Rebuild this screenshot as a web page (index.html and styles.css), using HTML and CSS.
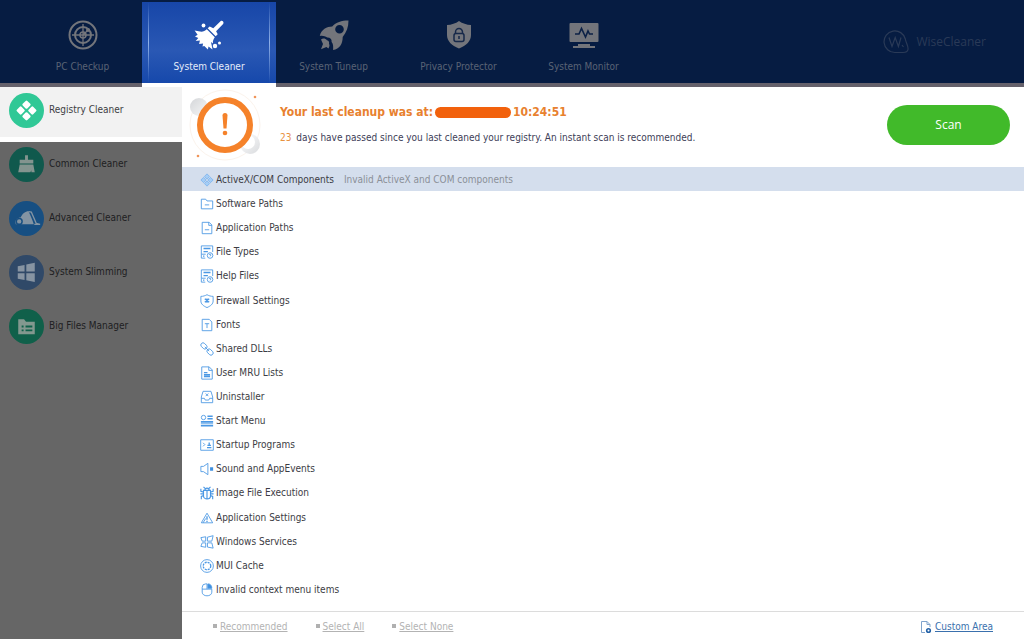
FILE: index.html
```
<!DOCTYPE html>
<html lang="en">
  <head>
    <meta charset="UTF-8" />
    <meta name="viewport" content="width=device-width, initial-scale=1.0" />
    <title>System Cleaner</title>
    <link rel="stylesheet" href="styles.css">
  </head>
  <body>
    <header class="header">
      <nav class="tabs">
        <button class="tab">
          <svg class="tab-icon" viewBox="0 0 30 30" fill="none" stroke="currentColor" stroke-width="2">
            <circle cx="15" cy="15" r="13.5" />
            <circle cx="15" cy="15" r="8" />
            <circle cx="15" cy="15" r="3" stroke-width="1.5" />
            <path d="M15 4v22M4 15h22M15 15l5-5" stroke-width="1.3" />
            <circle cx="20" cy="10" r="2" fill="currentColor" stroke="none" />
          </svg>
          <span>PC Checkup</span>
        </button>
        <button class="tab active">
          <svg class="tab-icon" viewBox="0 0 30 30" fill="currentColor">
            <path d="M26.500 1.200c1.600-1.200 4 .8 2.600 2.800l-7 7.200 1.600 3-2 2-8-8 2-1.800 3.600 1.800z" />
            <path d="M12.800 9.300l8 8c-1.400 2-2.200 3.800-1.800 6.200l-2-1.500 1.500 7.500-4-3-.6 3-3.600-3.500-1.800.5.600-3-4 .5.800-3.500-4.200.6 2.600-3.200L1 16.500l2.600-1.800-3-4.200 6.800 1.200c2 0 3.800-1 5.400-2.400z" />
            <circle cx="9.500" cy="5.500" r="1.900" />
            <circle cx="21" cy="26" r="2.200" />
            <circle cx="25.500" cy="23" r="1.500" />
          </svg>
          <span>System Cleaner</span>
        </button>
        <button class="tab">
          <svg class="tab-icon" viewBox="0 0 30 30" fill="currentColor" fill-rule="evenodd">
            <path d="M29.500.6C23 .5 17 2.500 13.200 6.500 8 6.500 2 9.500.8 16c3-.8 5 .3 7.500 1.500 3 0 4.700 1.500 4.300 4.500 2 2 1.500 5 1.500 8 6.500-1 9.600-6 9.600-13C27.500 12.500 29.500 7 29.500.6zM20.500 5a4.300 4.300 0 1 1 0 8.600 4.300 4.300 0 0 1 0-8.600z" />
            <path d="M2 19.500c2-1.500 4.500-1 6 .7 2 .5 2.500 2 2 3.500 1 1.500.3 3-.6 4.800l-2-1.500-5.400 2.300 2-5.300z" />
          </svg>
          <span>System Tuneup</span>
        </button>
        <button class="tab">
          <svg class="tab-icon" viewBox="0 0 30 30">
            <path d="M15 1c3.500 2.500 7.500 3.800 12 4v10c0 6-4.500 10.500-12 13.500C7.500 25.500 3 21 3 15V5c4.500-.2 8.500-1.500 12-4z" fill="currentColor" />
            <g fill="none" stroke="#17294a" stroke-width="1.500">
              <rect x="10" y="13.500" width="10" height="8" rx="2" />
              <path d="M11.500 13.500V12a3.500 3.500 0 0 1 7 0v1.500M15 16v3" />
            </g>
          </svg>
          <span>Privacy Protector</span>
        </button>
        <button class="tab">
          <svg class="tab-icon" viewBox="0 0 30 30" fill="currentColor">
            <rect x=".5" y="3" width="29" height="19" rx="1" />
            <path d="M9 24h12v2h5v2H4v-2h5z" />
            <path d="M6 14h4l2.500-5.500 4 8.500 2.500-6 1.500 3H24" fill="none" stroke="#0c2146" stroke-width="1.600" />
          </svg>
          <span>System Monitor</span>
        </button>
      </nav>
      <div class="brand">
        <svg class="brand-icon" viewBox="0 0 26 24" fill="none" stroke="currentColor" stroke-width="1.200">
          <path d="M20 22.500h-8A10.800 10.800 0 1 1 22.300 9c.8 4.500 3.200 7 2.700 10.500-.4 2.500-3 3-5 3" />
          <path d="M6 7.500l3 9 3.200-9 3.200 9 2.600-9M19 15l1.500 2" />
        </svg>
        <span>WiseCleaner</span>
      </div>
    </header>

    <div class="page">
      <!-- left menu -->
      <nav class="sidebar">
        <button class="side-item active">
          <svg class="side-icon" viewBox="0 0 36 36">
            <circle cx="18" cy="18" r="18" fill="#30c896" />
            <path d="M18 9l3 3-3 3-3-3zM12 15l3 3-3 3-3-3zM24 15l3 3-3 3-3-3zM18 21l3 3-3 3-3-3z" fill="#fff" stroke="#fff" stroke-width="2.500" stroke-linejoin="round" />
          </svg>
          <span>Registry Cleaner</span>
        </button>
        <button class="side-item">
          <svg class="side-icon" viewBox="0 0 36 36">
            <circle cx="18" cy="18" r="18" fill="#10594d" />
            <path d="M16.500 8.500h3V13H25v4H11v-4h5.500zM11 18h14l1.500 8H23v-2l-1 2H9.500z" fill="#83948f" />
          </svg>
          <span>Common Cleaner</span>
        </button>
        <button class="side-item">
          <svg class="side-icon" viewBox="0 0 36 36">
            <circle cx="18" cy="18" r="18" fill="#174f82" />
            <path d="M7 24c-1.500-5 2-7 5-7 1.500-4 5-6.500 8-6.500 2 4 4 8.500 5.500 13.500z" fill="#8394a3" />
            <circle cx="10.500" cy="21" r="3" fill="#8394a3" stroke="#174f82" stroke-width="1.500" />
            <path d="M20 11l3 .5 5 11.500 4 1h-6" fill="none" stroke="#8394a3" stroke-width="1.300" />
          </svg>
          <span>Advanced Cleaner</span>
        </button>
        <button class="side-item">
          <svg class="side-icon" viewBox="0 0 36 36">
            <circle cx="18" cy="18" r="18" fill="#304968" />
            <path d="M9 11.500l7-1.300V17H9zM17.800 9.800L26.500 8v9h-8.700zM9 18.800h7v6.800l-7-1.200zM17.800 18.800h8.700v9l-8.700-1.700z" fill="#8794a2" />
          </svg>
          <span>System Slimming</span>
        </button>
        <button class="side-item">
          <svg class="side-icon" viewBox="0 0 36 36">
            <circle cx="18" cy="18" r="18" fill="#10604a" />
            <path d="M9.500 10.500h6l2 2.500h9v13h-17z" fill="#83988f" />
            <path d="M13 18h2M17 18h7M13 22h2M17 22h7" stroke="#10604a" stroke-width="2" />
          </svg>
          <span>Big Files Manager</span>
        </button>
      </nav>

      <main class="main">
        <!-- last cleanup -->
        <section class="status">
          <svg class="status-icon" viewBox="0 0 76 72">
            <defs>
              <linearGradient id="ball" x1="0" y1="0" x2="1" y2="1">
                <stop offset="0" stop-color="#d4d6d9" />
                <stop offset="1" stop-color="#f8f8f8" />
              </linearGradient>
              <linearGradient id="moon" x1="0" y1="0" x2="1" y2="1">
                <stop offset="0" stop-color="#fff" />
                <stop offset="1" stop-color="#d9dbde" />
              </linearGradient>
            </defs>
            <circle cx="37" cy="36" r="35" fill="none" stroke="#fbf3ec" />
            <circle cx="11" cy="18" r="9" fill="url(#ball)" />
            <circle cx="62" cy="55" r="10" fill="url(#moon)" />
            <circle cx="60" cy="53" r="7" fill="#fff" />
            <circle cx="37" cy="36" r="25" fill="#fff" stroke="#f5822a" stroke-width="6" />
            <path d="M34.500 26.500a2.500 2.500 0 0 1 5 0l-1 13h-3z" fill="#f5822a" />
            <circle cx="37" cy="44" r="2.300" fill="#f5822a" />
            <circle cx="67" cy="8" r="1.300" fill="#f0955a" />
            <circle cx="10" cy="67" r="1.300" fill="#f0955a" />
          </svg>
          <div class="status-text">
            <h1>Your last cleanup was at: <span class="masked"></span> 10:24:51</h1>
            <p><span class="days">23</span> days have passed since you last cleaned your registry. An instant scan is recommended.</p>
          </div>
          <button class="scan">Scan</button>
        </section>

        <!-- registry areas -->
        <ul class="areas">
          <li class="area selected">
            <svg class="area-icon" viewBox="0 0 16 16"><path d="M8 1l3 3-3 3-3-3zM4 5l3 3-3 3-3-3zM12 5l3 3-3 3-3-3zM8 9l3 3-3 3-3-3z" fill="#a5cdf5" /></svg>
            <span>ActiveX/COM Components</span>
            <span class="hint">Invalid ActiveX and COM components</span>
          </li>
          <li class="area">
            <svg class="area-icon" viewBox="0 0 16 16"><path d="M1.500 13.500v-11h5l1.500 2h6.500v9zM5.500 9h5" /></svg>
            <span>Software Paths</span>
          </li>
          <li class="area">
            <svg class="area-icon" viewBox="0 0 16 16"><path d="M2.500 1.500h8l3 3v10h-11zM10 1.500V5h3.500M5.500 10h5" /></svg>
            <span>Application Paths</span>
          </li>
          <li class="area">
            <svg class="area-icon" viewBox="0 0 16 16"><path d="M6 15H1.500v-4.500h5M1.500 10.500V1h13v7" /><path d="M4 4h8M4 7.500h5M3.500 12.800H5" stroke-width="1.500" /><circle cx="11.500" cy="12" r="3.200" /><path d="M10.500 11.500c0-1.500 2-1.500 2 0l-1 1.500" /></svg>
            <span>File Types</span>
          </li>
          <li class="area">
            <svg class="area-icon" viewBox="0 0 16 16"><path d="M6 15H1.500v-4.500h5M1.500 10.500V1h13v7" /><path d="M4 4h8M4 7.500h5M3.500 12.800H5" stroke-width="1.500" /><circle cx="11.500" cy="12" r="3.200" /><path d="M10.500 11.500c0-1.500 2-1.500 2 0l-1 1.500" /></svg>
            <span>Help Files</span>
          </li>
          <li class="area">
            <svg class="area-icon" viewBox="0 0 16 16"><path d="M8 .8c2 1.200 4.500 1.900 7 1.900V8c0 3.500-3 5.800-7 7.500C4 13.800 1 11.500 1 8V2.700c2.500 0 5-.7 7-1.900z" /><path d="M5.500 5.500l5 4M10.500 5.500l-5 4M8 5v5" stroke-width="1.600" /></svg>
            <span>Firewall Settings</span>
          </li>
          <li class="area">
            <svg class="area-icon" viewBox="0 0 16 16"><path d="M2.500 1.500h8l3 3v10h-11zM5.500 6.500h5M8 6.500v5" /></svg>
            <span>Fonts</span>
          </li>
          <li class="area">
            <svg class="area-icon" viewBox="0 0 16 16"><rect x="-4" y="-2.500" width="8" height="5" rx="2.500" transform="translate(4.500 4.500) rotate(45)" /><rect x="-4" y="-2.500" width="8" height="5" rx="2.500" transform="translate(11.500 11.500) rotate(45)" /><path d="M5.500 5.500l5 5" /></svg>
            <span>Shared DLLs</span>
          </li>
          <li class="area">
            <svg class="area-icon" viewBox="0 0 16 16"><path d="M2 1h8.500L14 4.500V15H2zM10 1v4h4" /><path d="M4.500 7.500h4M4.500 10h7M4.500 12h7" stroke-width="1.500" /></svg>
            <span>User MRU Lists</span>
          </li>
          <li class="area">
            <svg class="area-icon" viewBox="0 0 16 16"><path d="M1.500 14.500V8L3.500 1.500h9l2 6.500v6.500zM1.500 9.500H5l1 2h4l1-2h3.500M6.500 4l3 3M9.500 4l-3 3" /></svg>
            <span>Uninstaller</span>
          </li>
          <li class="area">
            <svg class="area-icon" viewBox="0 0 16 16"><circle cx="4" cy="4" r="2.500" /><path d="M8.500 2.500h6M8.500 5.500h6M1 9h14M1 13.500h14" stroke-width="1.800" /><path d="M1 11.200h14" /></svg>
            <span>Start Menu</span>
          </li>
          <li class="area">
            <svg class="area-icon" viewBox="0 0 16 16"><path d="M.8 2h14.400v12H.8zM3.500 5.500l2 2-2 2" /><path d="M8 11h5M8.500 8.500h4M10.500 5v3" stroke-width="1.500" /></svg>
            <span>Startup Programs</span>
          </li>
          <li class="area">
            <svg class="area-icon" viewBox="0 0 16 16"><path d="M1 5h3l5-3.500v13L4 11H1z" /><path d="M11.500 6h3.500v4h-3.500z" fill="#3f8fdf" stroke="none" /></svg>
            <span>Sound and AppEvents</span>
          </li>
          <li class="area">
            <svg class="area-icon" viewBox="0 0 16 16"><path d="M4 5h8v6c0 5-8 5-8 0zM5.500 5c0-3.500 5-3.500 5 0M8 5v9.500M4 1l2 2M12 1l-2 2M1 3v3l3 1M15 3v3l-3 1M.5 9H4M12 9h3.500M1.500 15v-3L4 11M14.500 15v-3L12 11" stroke-width="1.300" /></svg>
            <span>Image File Execution</span>
          </li>
          <li class="area">
            <svg class="area-icon" viewBox="0 0 16 16"><path d="M8 2.500l6.500 11h-13zM3.500 13.500l3-5" /><path d="M8 6v4M8 11v1.500" stroke-width="1.500" /></svg>
            <span>Application Settings</span>
          </li>
          <li class="area">
            <svg class="area-icon" viewBox="0 0 16 16"><path d="M1 3l5.500-1v5H2.500zM8.500 2.500L15 .8 13.500 7h-5zM2.500 9h4v5L1 13zM8.500 9h5l1.500 6-6.500-1.200z" stroke-linejoin="round" /></svg>
            <span>Windows Services</span>
          </li>
          <li class="area">
            <svg class="area-icon" viewBox="0 0 16 16"><circle cx="8" cy="8" r="7.300" /><circle cx="8" cy="8" r="4.300" stroke-width="1.500" stroke-dasharray="2.400 1" /></svg>
            <span>MUI Cache</span>
          </li>
          <li class="area">
            <svg class="area-icon" viewBox="0 0 16 16"><path d="M2.500 5a4 4 0 0 1 4-4H8v6h5.500v3.500c0 5.500-11 5.500-11 0zM2.500 7H8" /><path d="M9 1c3 0 4.500 2 4.500 5H9z" fill="#3f8fdf" /></svg>
            <span>Invalid context menu items</span>
          </li>
        </ul>

        <footer class="footer">
          <a class="pick" href="#">Recommended</a>
          <a class="pick" href="#">Select All</a>
          <a class="pick" href="#">Select None</a>
          <a class="custom" href="#">
            <svg class="custom-icon" viewBox="0 0 12 14" fill="none" stroke="#7fa3cc"><path d="M5 12.500H1.500v-11H7l3 3V7M7 1.500v3h3" /><circle cx="8.500" cy="10.500" r="1.800" stroke="#2563a8" stroke-width="1.600" /></svg>
            <span>Custom Area</span>
          </a>
        </footer>
      </main>
    </div>
  </body>
</html>
```
FILE: styles.css
```
* {
  box-sizing: border-box;
}
body {
  display: flex;
  flex-direction: column;
  min-height: 100vh;
  margin: 0;
  background-color: #fff;
  color: #3c3c44;
  font-family: "DejaVu Sans Condensed", "DejaVu Sans", Tahoma, sans-serif;
  font-size: 10px;
  line-height: 16px;
}
button {
  margin: 0;
  padding: 0;
  border: 0;
  background: none;
  color: inherit;
  font: inherit;
  cursor: pointer;
}

/* top bar */
.header {
  position: relative;
  z-index: 1;
  display: flex;
  justify-content: space-between;
  padding-left: 20px;
  border-bottom: 4px solid #65616b;
  background-color: #061c42;
}
.tabs {
  display: flex;
}
.tab {
  display: flex;
  flex-direction: column;
  align-items: center;
  gap: 9px;
  width: 125px;
  height: 83px;
  padding-top: 20px;
  color: #73757b;
}
.tab span {
  color: #5a6375;
}
.tab-icon {
  width: 30px;
  height: 30px;
}
.tab.active {
  width: 134px;
  height: 87px;
  margin: 0 -5px -4px -3px;
  padding-top: 18px;
  border-top: 2px solid #061c42;
  border-bottom: 4px solid #fff;
  background:
    linear-gradient(transparent, #8fb0e8 50%, transparent) 6px 0 / 1px 100% no-repeat,
    linear-gradient(transparent, #8fb0e8 50%, transparent) 127px 0 / 1px 100% no-repeat,
    linear-gradient(#1746a8, #2a58b4 60%, #1648ab);
  color: #fff;
}
.tab.active span {
  color: #e4ecfa;
}
.brand {
  display: flex;
  align-items: center;
  gap: 7px;
  padding-right: 38px;
  color: #2a3a57;
  font-family: "Open Sans", sans-serif;
  font-size: 12px;
}
.brand-icon {
  width: 26px;
  height: 24px;
}

.page {
  display: flex;
  flex: 1;
}

/* left menu */
.sidebar {
  width: 182px;
  margin-top: -4px;
  background-color: #666;
}
.side-item {
  display: flex;
  align-items: center;
  gap: 5px;
  width: 100%;
  height: 54px;
  padding-left: 9px;
  color: #202022;
}
.side-item.active {
  position: relative;
  background-color: #f2f2f2;
  box-shadow: 0 5px 0 #fff;
  color: #404044;
}
.side-icon {
  width: 35px;
  height: 35px;
}

.main {
  display: flex;
  flex: 1;
  flex-direction: column;
}

/* last cleanup */
.status {
  display: flex;
  align-items: center;
  height: 80px;
  padding: 0 14px 4px 6px;
}
.status-icon {
  width: 76px;
  height: 72px;
}
.status-text {
  flex: 1;
  padding-left: 16px;
}
.status h1 {
  display: flex;
  align-items: center;
  gap: 2px;
  margin: 0 0 10px;
  color: #e8812f;
  font-size: 12px;
  line-height: 16px;
}
.masked {
  width: 76px;
  height: 11px;
  border-radius: 6px;
  background-color: #f2610c;
}
.status p {
  margin: 0;
  color: #404058;
}
.days {
  margin-right: 2px;
  color: #e8913f;
}
.scan {
  width: 123px;
  height: 40px;
  border-radius: 20px;
  background-color: #41ba2a;
  color: #fff;
  font-family: "Open Sans", sans-serif;
  font-size: 12px;
}

/* registry areas */
.areas {
  display: grid;
  flex: 1;
  grid-auto-rows: 1fr;
  margin: 0;
  padding: 0 0 10px;
  list-style: none;
}
.area {
  display: flex;
  align-items: center;
  gap: 2px;
  min-height: 24px;
  padding: 2px 0 0 18px;
}
.area.selected {
  background-color: #d4deed;
}
.area-icon {
  width: 14px;
  height: 14px;
  fill: none;
  stroke: #4b98e4;
}
.selected .area-icon {
  stroke: #7fb5ee;
}
.hint {
  margin-left: 8px;
  color: #8b9098;
}

/* bottom links */
.footer {
  display: flex;
  align-items: center;
  gap: 28px;
  height: 28px;
  padding: 3px 31px 0;
  border-top: 1px solid #dcdcdc;
}
.pick {
  color: #b3b3b3;
}
.pick::before {
  content: "";
  display: inline-block;
  width: 4px;
  height: 4px;
  margin-right: 3px;
  background-color: #b0b0b0;
  vertical-align: 2px;
}
.custom {
  display: flex;
  align-items: center;
  gap: 3px;
  margin-left: auto;
  color: #3a70ad;
}
.custom-icon {
  width: 12px;
  height: 14px;
}
```
